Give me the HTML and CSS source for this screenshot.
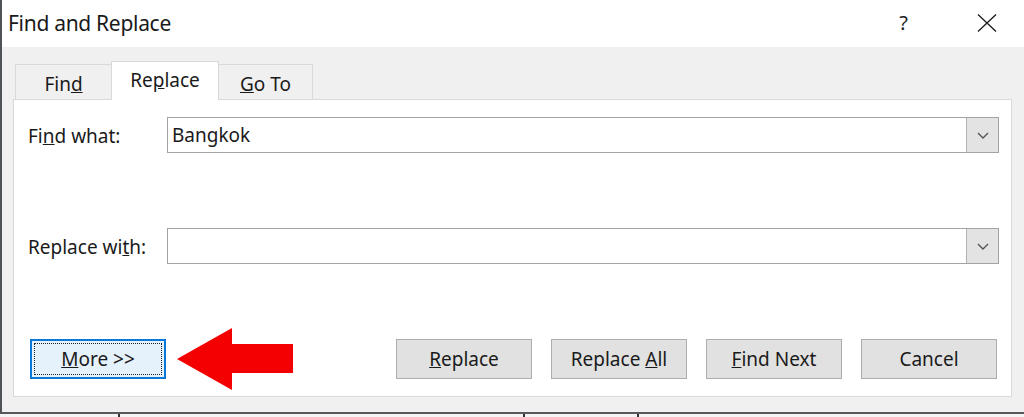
FILE: index.html
```html
<!DOCTYPE html>
<html>
<head>
<meta charset="utf-8">
<link rel="stylesheet" href="styles.css">
</head>
<body>
<div class="screen">
  <div class="row">
    <div class="leftedge"></div>
    <div class="window">
      <div class="titlebar">
        <span class="title">Find and Replace</span>
        <span class="help">?</span>
        <svg class="close" width="20" height="18" viewBox="0 0 20 18"><path d="M1 0.5 L19 17.5 M19 0.5 L1 17.5" stroke="#1a1a1a" stroke-width="1.3" fill="none"/></svg>
      </div>
      <div class="body">
        <div class="tabs">
          <div class="tab tab-find">Fin<u>d</u></div>
          <div class="tab tab-active">Re<u>p</u>lace</div>
          <div class="tab tab-goto"><u>G</u>o To</div>
        </div>
        <div class="panel">
          <div class="field">
            <label class="label">Fi<u>n</u>d what:</label>
            <div class="combo">
              <span class="value">Bangkok</span>
              <span class="drop"><svg width="12" height="7" viewBox="0 0 12 7"><path d="M1 1 L6 6 L11 1" stroke="#555" stroke-width="1.4" fill="none"/></svg></span>
            </div>
          </div>
          <div class="field field-second">
            <label class="label">Replace wi<u>t</u>h:</label>
            <div class="combo">
              <span class="value"></span>
              <span class="drop"><svg width="12" height="7" viewBox="0 0 12 7"><path d="M1 1 L6 6 L11 1" stroke="#555" stroke-width="1.4" fill="none"/></svg></span>
            </div>
          </div>
          <div class="actions">
            <button class="btn btn-more"><span class="focus"><u>M</u>ore &gt;&gt;</span></button>
            <svg class="arrow" width="116" height="62" viewBox="0 0 116 62"><polygon points="0,31 55,0 55,16 116,16 116,45 55,45 55,62" fill="#f50000"/></svg>
            <div class="group">
              <button class="btn"><u>R</u>eplace</button>
              <button class="btn">Replace <u>A</u>ll</button>
              <button class="btn"><u>F</u>ind Next</button>
              <button class="btn">Cancel</button>
            </div>
          </div>
        </div>
      </div>
    </div>
  </div>
  <div class="frameline"></div>
  <div class="desk">
    <span class="tick t1"></span>
    <span class="tick t2"></span>
    <span class="tick t3"></span>
  </div>
</div>
</body>
</html>
```

FILE: styles.css
```css
html, body {
  margin: 0;
  padding: 0;
  background: #f0f0f0;
}
body {
  width: 1024px;
  height: 417px;
  overflow: hidden;
  font-family: "Noto Sans", "Open Sans", "Liberation Sans", sans-serif;
  color: #1a1a1a;
}
.screen {
  display: flex;
  flex-direction: column;
  width: 1024px;
  height: 417px;
}
.row {
  display: flex;
  height: 412px;
}
.leftedge {
  width: 2px;
  background: #4f5256;
}
.window {
  flex: 1;
  display: flex;
  flex-direction: column;
  min-width: 0;
}
.titlebar {
  height: 47px;
  background: #ffffff;
  display: flex;
  align-items: center;
  padding-left: 6px;
  box-sizing: border-box;
  padding-bottom: 2px;
}
.title {
  font-size: 21px;
  flex: 1;
  letter-spacing: -0.3px;
}
.help {
  font-size: 20px;
  margin-right: 69px;
  color: #222;
}
.close {
  margin-right: 27px;
}
.body {
  flex: 1;
  background: #f0f0f0;
  padding: 14px 12px 0 11px;
  display: flex;
  flex-direction: column;
}
.tabs {
  display: flex;
  align-items: flex-end;
  height: 38px;
  padding-left: 2px;
  position: relative;
  z-index: 1;
}
.tab {
  height: 35px;
  box-sizing: border-box;
  border: 1px solid #d9d9d9;
  border-bottom: none;
  background: #f0f0f0;
  font-size: 19px;
  display: flex;
  align-items: center;
  justify-content: center;
  padding-top: 3px;
}
.tab-find {
  width: 96px;
  border-right: none;
}
.tab-active {
  width: 108px;
  height: 39px;
  margin-bottom: -1px;
  background: #ffffff;
  padding-top: 0;
  padding-bottom: 3px;
}
.tab-goto {
  width: 94px;
  border-left: none;
}
.panel {
  height: 298px;
  box-sizing: border-box;
  background: #ffffff;
  border: 1px solid #d9d9d9;
  padding: 17px 12px 0 14px;
  display: flex;
  flex-direction: column;
}
.field {
  display: flex;
  align-items: center;
  height: 36px;
}
.field-second {
  margin-top: 75px;
  height: 36px;
}
.label {
  width: 139px;
  font-size: 19px;
  padding-top: 1px;
}
.combo {
  flex: 1;
  height: 100%;
  box-sizing: border-box;
  border: 1px solid #a3a3a3;
  display: flex;
  align-items: stretch;
}
.value {
  flex: 1;
  font-size: 19px;
  padding-left: 4px;
  display: flex;
  align-items: center;
}
.drop {
  width: 31px;
  background: #e3e3e3;
  border-left: 1px solid #b3b3b3;
  display: flex;
  align-items: center;
  justify-content: center;
}
.actions {
  display: flex;
  align-items: center;
  margin-top: 75px;
  padding-left: 2px;
  padding-right: 2px;
}
.btn {
  width: 136px;
  height: 40px;
  box-sizing: border-box;
  border: 1px solid #adadad;
  background: #e1e1e1;
  font-family: inherit;
  font-size: 19px;
  color: #1a1a1a;
  padding: 0;
}
.btn-more {
  border: 2px solid #0a78d7;
  background: #e5f1fb;
  padding: 2px;
}
.focus {
  display: flex;
  align-items: center;
  justify-content: center;
  height: 100%;
  box-sizing: border-box;
  border: 1.5px dotted #222;
}
.arrow {
  margin: -11px 0 -11px 11px;
}
.group {
  margin-left: auto;
  display: flex;
  gap: 19px;
}
.frameline {
  height: 2px;
  background: #55585c;
}
.desk {
  flex: 1;
  background: #f4f4f4;
  display: flex;
}
.tick {
  width: 2px;
  height: 3px;
  background: #333;
}
.t1 { margin-left: 118px; }
.t2 { margin-left: 403px; }
.t3 { margin-left: 112px; }
```
